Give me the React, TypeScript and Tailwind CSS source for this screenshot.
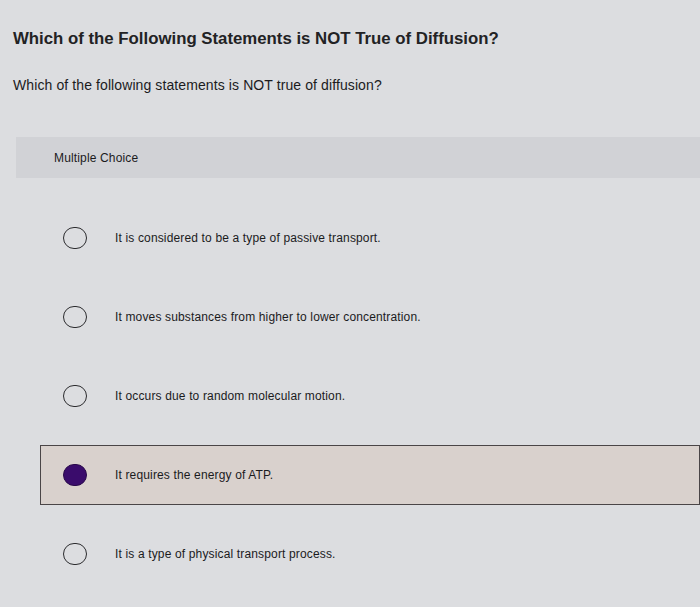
import { useState } from 'react'

const OPTIONS = [
  'It is considered to be a type of passive transport.',
  'It moves substances from higher to lower concentration.',
  'It occurs due to random molecular motion.',
  'It requires the energy of ATP.',
  'It is a type of physical transport process.',
]

export default function App() {
  const [selected, setSelected] = useState(3)

  return (
    <div
      className="w-[700px] h-[607px] overflow-hidden bg-[#dcdde0] text-[#1b1b1d]"
      style={{ fontFamily: '"Liberation Sans", Arial, sans-serif' }}
    >
      {/* title */}
      <h1 className="pl-[13px] pt-[28px] text-[16.8px] font-bold leading-[22px] text-[#222224]">
        Which of the Following Statements is NOT True of Diffusion?
      </h1>

      <p className="pl-[13px] pt-[26px] text-[14px] leading-[18px] tracking-[0.1px]">
        Which of the following statements is NOT true of diffusion?
      </p>

      {/* question type band */}
      <div className="mt-[43px] ml-[16px] h-[41px] flex items-center bg-[#d1d2d6] pl-[38px]">
        <span className="text-[12px] tracking-[0.15px]">Multiple Choice</span>
      </div>

      {/* answers */}
      <div className="mt-[30px] ml-[40px] flex flex-col gap-[19px]">
        {OPTIONS.map((opt, i) => {
          const isSel = i === selected
          return (
            <button
              key={i}
              onClick={() => setSelected(i)}
              className={`h-[60px] flex items-center pl-[22px] text-left border ${
                isSel ? 'border-[#4a4547] bg-[#d9d1cd]' : 'border-transparent'
              }`}
            >
              <span
                className={`w-[24px] h-[22px] rounded-full shrink-0 ${
                  isSel ? 'bg-[#3a0c6c] border border-[#2a0a4a]' : 'border-[1.5px] border-[#2b2b2e]'
                }`}
              />
              <span className="ml-[28px] text-[12px] tracking-[0.15px]">{opt}</span>
            </button>
          )
        })}
      </div>
    </div>
  )
}
